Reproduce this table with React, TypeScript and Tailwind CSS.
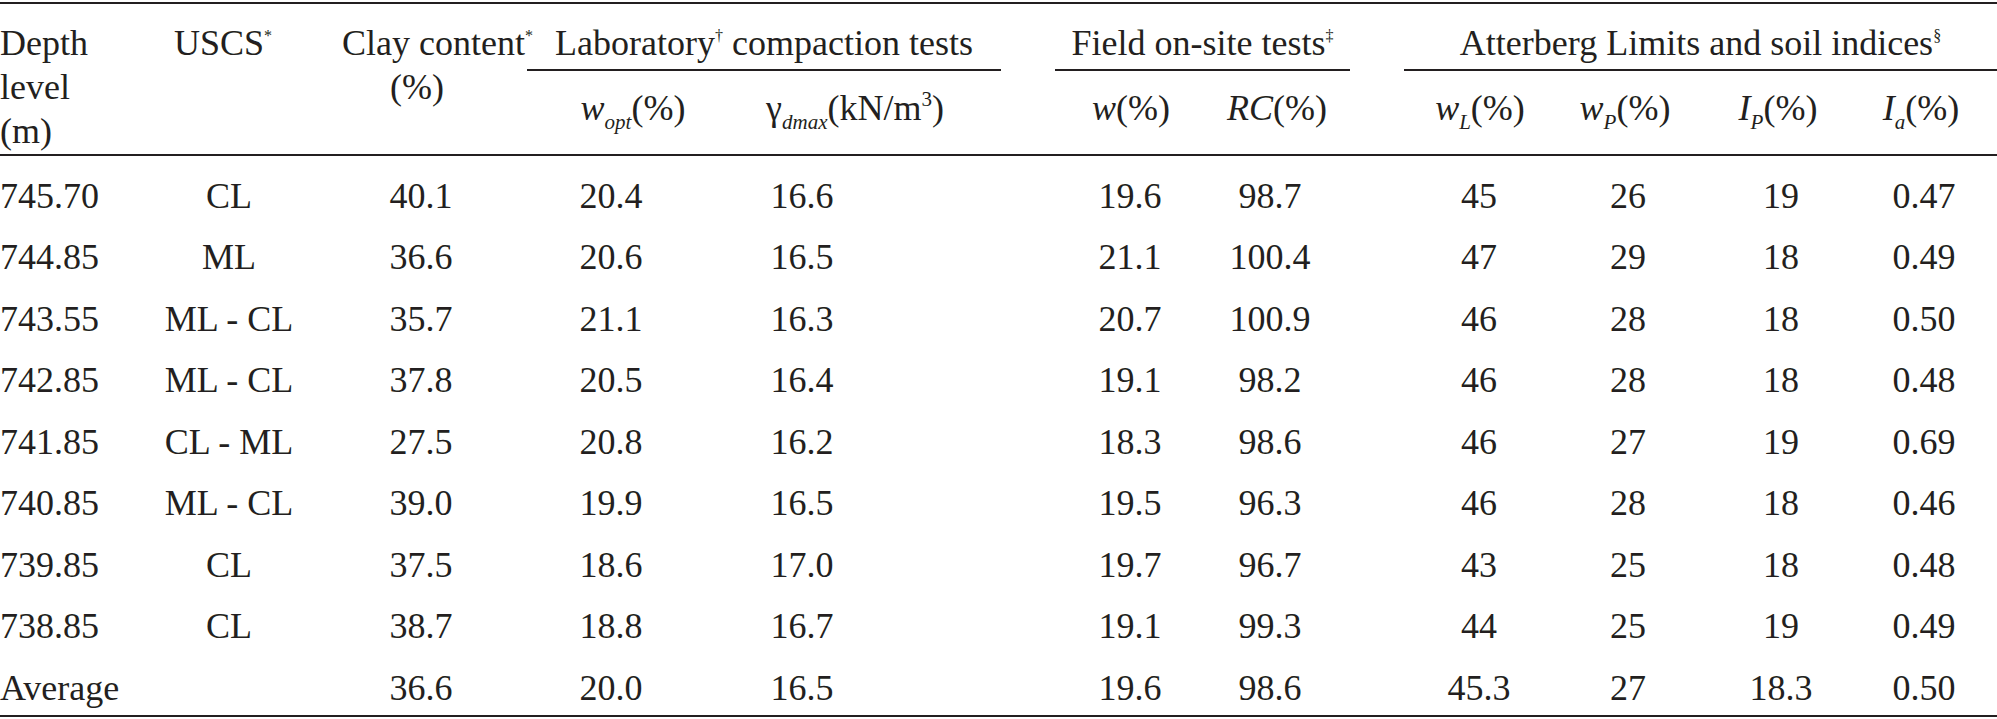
import React from "react";

const rows: string[][] = [
  ["745.70", "CL", "40.1", "20.4", "16.6", "19.6", "98.7", "45", "26", "19", "0.47"],
  ["744.85", "ML", "36.6", "20.6", "16.5", "21.1", "100.4", "47", "29", "18", "0.49"],
  ["743.55", "ML - CL", "35.7", "21.1", "16.3", "20.7", "100.9", "46", "28", "18", "0.50"],
  ["742.85", "ML - CL", "37.8", "20.5", "16.4", "19.1", "98.2", "46", "28", "18", "0.48"],
  ["741.85", "CL - ML", "27.5", "20.8", "16.2", "18.3", "98.6", "46", "27", "19", "0.69"],
  ["740.85", "ML - CL", "39.0", "19.9", "16.5", "19.5", "96.3", "46", "28", "18", "0.46"],
  ["739.85", "CL", "37.5", "18.6", "17.0", "19.7", "96.7", "43", "25", "18", "0.48"],
  ["738.85", "CL", "38.7", "18.8", "16.7", "19.1", "99.3", "44", "25", "19", "0.49"],
  ["Average", "", "36.6", "20.0", "16.5", "19.6", "98.6", "45.3", "27", "18.3", "0.50"],
];

const cols = [
  "w-[150px] justify-start",
  "w-[158px] justify-center",
  "w-[226px] justify-center",
  "w-[154px] justify-center",
  "w-[228px] mr-[144px] justify-center",
  "w-[140px] justify-center",
  "w-[140px] mr-[64px] justify-center",
  "w-[150px] justify-center",
  "w-[148px] justify-center",
  "w-[158px] justify-center",
  "w-[128px] justify-center",
];

function Sup({ children }: { children: React.ReactNode }) {
  return <span className="relative top-[-14px] text-[16px] leading-none">{children}</span>;
}

function Sub({ children }: { children: React.ReactNode }) {
  return <span className="relative top-[9px] text-[21px] italic leading-none">{children}</span>;
}

const subBox = "flex w-[140px] shrink-0 justify-center whitespace-nowrap";

export default function App() {
  return (
    <div className="w-[1997px] bg-white pt-[2px] font-['Liberation_Serif','Times_New_Roman',serif] text-[36px] text-[#231f20]">
      <div className="border-y-2 border-[#231f20]">
        {/* header */}
        <div className="flex pt-[17px] pb-[1px] leading-[44px]">
          <div className="flex w-[150px] shrink-0 flex-col">
            <span>Depth</span>
            <span>level</span>
            <span>(m)</span>
          </div>
          <div className="w-[140px] shrink-0 whitespace-nowrap pl-[24px]">
            USCS<Sup>*</Sup>
          </div>
          <div className="flex w-[237px] shrink-0 flex-col whitespace-nowrap">
            <span className="pl-[52px]">
              Clay content<Sup>*</Sup>
            </span>
            <span className="pl-[100px]">(%)</span>
          </div>
          <div className="flex w-[1470px] shrink-0 flex-col">
            <div className="flex">
              <div className="w-[474px] shrink-0 whitespace-nowrap border-b-2 border-[#231f20] pb-[4px] text-center">
                Laboratory<Sup>†</Sup> compaction tests
              </div>
              <div className="ml-[54px] w-[295px] shrink-0 whitespace-nowrap border-b-2 border-[#231f20] pb-[4px] text-center">
                Field on-site tests<Sup>‡</Sup>
              </div>
              <div className="ml-[54px] w-[593px] shrink-0 whitespace-nowrap border-b-2 border-[#231f20] pb-[4px] text-center">
                Atterberg Limits and soil indices<Sup>§</Sup>
              </div>
            </div>
            <div className="mt-[15px] flex">
              <div className={`${subBox} ml-[36px]`}>
                <span>
                  <i>w</i>
                  <Sub>opt</Sub>(%)
                </span>
              </div>
              <div className={`${subBox} ml-[82px]`}>
                <span>
                  γ<Sub>dmax</Sub>(kN/m<span className="relative top-[-14px] text-[21px] leading-none">3</span>)
                </span>
              </div>
              <div className={`${subBox} ml-[136px]`}>
                <span>
                  <i>w</i>(%)
                </span>
              </div>
              <div className={`${subBox} ml-[6px]`}>
                <span>
                  <i>RC</i>(%)
                </span>
              </div>
              <div className={`${subBox} ml-[63px]`}>
                <span>
                  <i>w</i>
                  <Sub>L</Sub>(%)
                </span>
              </div>
              <div className={`${subBox} ml-[5px]`}>
                <span>
                  <i>w</i>
                  <Sub>P</Sub>(%)
                </span>
              </div>
              <div className={`${subBox} ml-[13px]`}>
                <span>
                  <i>I</i>
                  <Sub>P</Sub>(%)
                </span>
              </div>
              <div className={`${subBox} ml-[3px]`}>
                <span>
                  <i>I</i>
                  <Sub>a</Sub>(%)
                </span>
              </div>
            </div>
          </div>
        </div>
        {/* body */}
        <div className="border-t-2 border-[#231f20] pb-[5px]">
          {rows.map((r, i) => (
            <div key={i} className="flex h-[61.5px] items-end leading-[43px]">
              {r.map((c, j) => (
                <div key={j} className={`flex shrink-0 whitespace-nowrap ${cols[j]}`}>
                  {c}
                </div>
              ))}
            </div>
          ))}
        </div>
      </div>
    </div>
  );
}
